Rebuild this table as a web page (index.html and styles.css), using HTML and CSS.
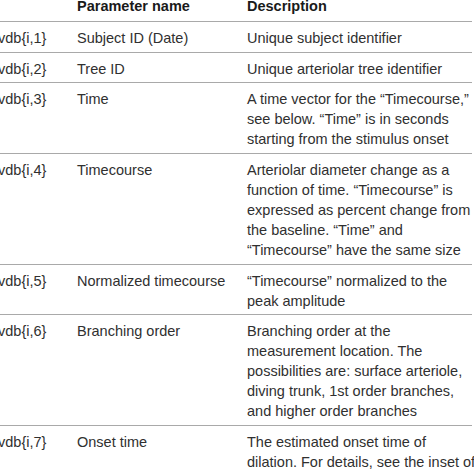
FILE: index.html
```html
<!DOCTYPE html>
<html>
<head>
<meta charset="utf-8">
<link rel="stylesheet" href="styles.css">
</head>
<body>
<div class="table">
  <div class="row head">
    <div class="c1"></div>
    <div class="c2">Parameter name</div>
    <div class="c3">Description</div>
  </div>
  <div class="row">
    <div class="c1">vdb{i,1}</div>
    <div class="c2">Subject ID (Date)</div>
    <div class="c3">Unique subject identifier</div>
  </div>
  <div class="row">
    <div class="c1">vdb{i,2}</div>
    <div class="c2">Tree ID</div>
    <div class="c3">Unique arteriolar tree identifier</div>
  </div>
  <div class="row">
    <div class="c1">vdb{i,3}</div>
    <div class="c2">Time</div>
    <div class="c3">A time vector for the “Timecourse,”<br>see below. “Time” is in seconds<br>starting from the stimulus onset</div>
  </div>
  <div class="row">
    <div class="c1">vdb{i,4}</div>
    <div class="c2">Timecourse</div>
    <div class="c3">Arteriolar diameter change as a<br>function of time. “Timecourse” is<br>expressed as percent change from<br>the baseline. “Time” and<br>“Timecourse” have the same size</div>
  </div>
  <div class="row">
    <div class="c1">vdb{i,5}</div>
    <div class="c2">Normalized timecourse</div>
    <div class="c3">“Timecourse” normalized to the<br>peak amplitude</div>
  </div>
  <div class="row">
    <div class="c1">vdb{i,6}</div>
    <div class="c2">Branching order</div>
    <div class="c3">Branching order at the<br>measurement location. The<br>possibilities are: surface arteriole,<br>diving trunk, 1st order branches,<br>and higher order branches</div>
  </div>
  <div class="row">
    <div class="c1">vdb{i,7}</div>
    <div class="c2">Onset time</div>
    <div class="c3">The estimated onset time of<br>dilation. For details, see the inset of</div>
  </div>
</div>
</body>
</html>
```
FILE: styles.css
```css
html, body {
  margin: 0;
  padding: 0;
  background: #ffffff;
  overflow: hidden;
}
body {
  font-family: "Liberation Sans", Arial, sans-serif;
  font-size: 14.5px;
  line-height: 20px;
  color: #303030;
}
.table {
  width: 474px;
  margin-left: -2px;
  margin-top: -4px;
}
.row {
  display: grid;
  grid-template-columns: 79px 170px 1fr;
  padding: 6px 0 3.7px;
  border-bottom: 1.5px solid #a9a9a9;
}
.row.head {
  padding: 0 0 5px;
  font-weight: bold;
  color: #1a1a1a;
}
.c3 {
  white-space: nowrap;
}
```
